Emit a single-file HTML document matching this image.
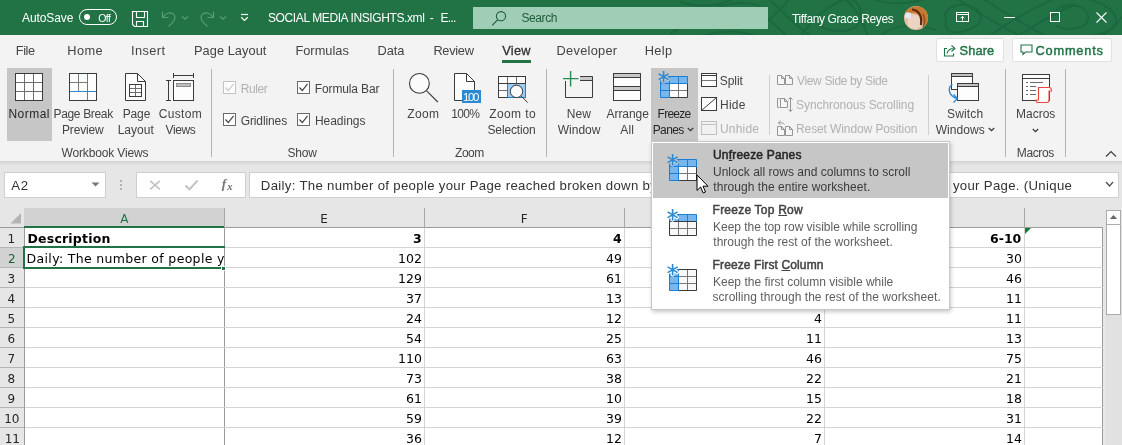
<!DOCTYPE html>
<html lang="en"><head><meta charset="utf-8"><title>SOCIAL MEDIA INSIGHTS.xml - Excel</title>
<style>
html,body{margin:0;padding:0;background:#fff;}
body{width:1122px;height:445px;overflow:hidden;font-family:"Liberation Sans",sans-serif;}
#app{will-change:transform;position:relative;width:1122px;height:445px;overflow:hidden;background:#fff;}
#app div,#app svg,#app span{position:absolute;box-sizing:border-box;}
.t{white-space:pre;}
.t u{text-decoration:underline;text-underline-offset:1px;}
.sep{width:1px;background:#b4b4b4;}
.cb{width:13px;height:13px;border:1px solid #6a6a6a;background:#fdfdfd;}
.cb.dis{border-color:#c4c4c4;}
.cb svg{left:0;top:0;}
.hl{background:#e6e6e6;}
.gv{width:1px;background:#d4d4d4;top:228px;height:217px;}
.gh{height:1px;background:#d4d4d4;left:25px;width:1078px;}
.hv{width:1px;background:#a6a6a6;top:208px;height:20px;}
.rh{height:1px;background:#b4b4b4;left:0;width:24px;}

</style></head>
<body>
<div id="app">
<!-- ===== title bar ===== -->
<div id="titlebar" style="left:0;top:0;width:1122px;height:35px;background:#217346;"></div>
<svg id="tpattern" style="left:670px;top:0" width="452" height="35" viewBox="-90 0 452 35" fill="none" stroke="#1a643b" stroke-width="2" opacity=".7">
  <path d="M-90 34 C -70 20, -50 4, -20 3 S 10 20, 0 27"/>
  <path d="M-60 37 C -40 30, -20 30, 0 37"/>
  <path d="M-80 2 C -60 8, -40 6, -25 -2"/>
  <path d="M0 27 C 12 18, 22 8, 30 -2"/>
  <path d="M8 -2 C 20 10, 34 24, 52 37"/>
  <path d="M-4 8 C 10 20, 20 30, 28 37"/>
  <path d="M40 37 C 50 22, 62 10, 78 2 S 104 6, 100 20 S 70 34, 58 24"/>
  <path d="M84 -2 C 96 8, 104 22, 108 37"/>
  <path d="M112 -2 C 126 6, 150 4, 170 -2"/>
  <path d="M120 37 C 130 26, 150 22, 176 30"/>
  <path d="M186 20 C 182 8, 196 2, 210 6 S 226 24, 208 30 S 184 30, 186 20"/>
  <path d="M196 -2 C 214 10, 236 24, 262 37"/>
  <path d="M222 -2 C 240 10, 262 24, 288 37"/>
  <path d="M228 37 C 246 24, 268 10, 296 -2"/>
  <path d="M256 37 C 274 26, 292 14, 316 4"/>
  <path d="M296 10 C 306 2, 326 4, 328 16 S 310 32, 296 26"/>
  <path d="M324 -2 C 340 2, 358 10, 356 22 S 336 34, 322 37"/>
  <path d="M340 37 C 350 30, 358 24, 364 14"/>
</svg>
<div id="search" style="left:473px;top:7px;width:295px;height:22px;background:#a0cdb5;"></div>
<svg style="left:491px;top:10px" width="17" height="17" viewBox="0 0 17 17" fill="none" stroke="#1e5c3a" stroke-width="1.1"><circle cx="10" cy="6.2" r="4.6"/><path d="M6.8 9.6 L1.2 15.4"/></svg>
<!-- autosave toggle -->
<div style="left:79px;top:9px;width:38px;height:16px;border:1px solid #fff;border-radius:8px;"></div>
<div style="left:84px;top:14px;width:6px;height:6px;border-radius:3px;background:#fff;"></div>
<!-- save -->
<svg style="left:131px;top:10px" width="19" height="18" viewBox="0 0 19 18" fill="none" stroke="#fff" stroke-width="1.1"><path d="M1.5 1.5 H16.5 V16.5 H3.5 L1.5 14.5 Z"/><path d="M5.5 1.5 V7.5 H13.5 V1.5"/><path d="M5.5 16.5 V11.5 H12.5 V16.5"/></svg>
<!-- undo / redo -->
<svg style="left:160px;top:9px" width="70" height="20" viewBox="0 0 70 20" fill="none" stroke="#5c9c7a" stroke-width="1.1"><path d="M2.5 2.5 V8.5 H8.5"/><path d="M2.8 8.3 C6 3.5 11.5 2.5 14.3 6 C16.5 9 14.5 12.5 8.5 17.5"/><path d="M22 7.5 L25 10.2 L28 7.5"/><path d="M53.5 2.5 V8.5 H47.5"/><path d="M53.2 8.3 C50 3.5 44.5 2.5 41.7 6 C39.5 9 41.5 12.5 47.5 17.5"/><path d="M60 7.5 L63 10.2 L66 7.5"/></svg>
<!-- customize qat -->
<svg style="left:240px;top:13px" width="10" height="9" viewBox="0 0 10 9" fill="none" stroke="#fff" stroke-width="1.2"><path d="M1 1.500 H8"/><path d="M1.200 4.300 L4.500 7.500 L7.800 4.300"/></svg>
<!-- avatar -->
<svg id="avatar" style="left:904px;top:6px" width="24" height="24" viewBox="0 0 24 24"><clipPath id="avc"><circle cx="12" cy="12" r="12"/></clipPath><g clip-path="url(#avc)"><rect width="24" height="24" fill="#e2bea6"/><ellipse cx="10.500" cy="16" rx="7" ry="7" fill="#edd3c1"/><path d="M-1 9 C 3 -1, 19 -3, 25 6 V 22 C 21 23, 19 16, 17 11 C 13 6, 6 6, -1 9 Z" fill="#c8792f"/><path d="M8 3.500 C 15 4, 18 10, 17 19" fill="none" stroke="#5a2715" stroke-width="2.200"/><path d="M19 8 C 21 12, 21 17, 19 21" fill="none" stroke="#9a4f1e" stroke-width="1.500"/><circle cx="4" cy="9.500" r="3.200" fill="#e4e9f3"/></g></svg>
<!-- window buttons -->
<svg style="left:956px;top:12px" width="14" height="11" viewBox="0 0 14 11" fill="none" stroke="#fff" stroke-width="1"><rect x=".5" y=".5" width="12" height="9"/><path d="M.5 2.500 H12.500"/><path d="M6.500 8.500 V4.500 M4.500 6.300 L6.500 4.300 L8.500 6.300"/></svg>
<div style="left:1004px;top:17px;width:11px;height:1px;background:#fff;"></div>
<div style="left:1050px;top:12px;width:10px;height:10px;border:1px solid #fff;"></div>
<svg style="left:1095.500px;top:12px" width="11" height="11" viewBox="0 0 11 11" fill="none" stroke="#fff" stroke-width="1.1"><path d="M.5 .5 L10.5 10.5 M10.5 .5 L.5 10.5"/></svg>

<!-- ===== ribbon ===== -->
<div id="ribbon" style="left:0;top:35px;width:1122px;height:126px;background:#f3f3f3;"></div>
<div id="below" style="left:0;top:161px;width:1122px;height:47px;background:linear-gradient(#d2d2d2 0,#dcdcdc 2px,#e6e6e6 5px,#e6e6e6 100%);"></div>
<div style="left:502px;top:60px;width:29px;height:3px;background:#217346;"></div>
<!-- share / comments -->
<div style="left:936px;top:38px;width:68px;height:24px;background:#fff;border:1px solid #e0e0e0;border-radius:2px;"></div>
<div style="left:1012px;top:38px;width:100px;height:24px;background:#fff;border:1px solid #e0e0e0;border-radius:2px;"></div>
<svg style="left:943px;top:44px" width="15" height="13" viewBox="0 0 15 13" fill="none" stroke="#217346" stroke-width="1.1"><path d="M4 4.5 H1.5 V12 H10.5 V9.5"/><path d="M4 9.5 C5 6 7.5 4.5 10.5 4.5 M8.5 1.5 L12 4.5 L8.5 7.5"/></svg>
<svg style="left:1020px;top:44px" width="13" height="12" viewBox="0 0 13 12" fill="none" stroke="#217346" stroke-width="1.1"><path d="M1 1 H12 V8 H5.5 L3 10.5 V8 H1 Z"/></svg>

<!-- selected buttons -->
<div style="left:7px;top:68px;width:45px;height:73px;background:#c6c6c6;"></div>
<div style="left:651px;top:68px;width:47px;height:74px;background:#c6c6c6;"></div>

<!-- Normal -->
<svg style="left:14px;top:72px" width="30" height="30" viewBox="0 0 30 30" fill="#fdfdfd" stroke="#3b3b3b" stroke-width="1"><rect x="1.5" y="1.5" width="27" height="27"/><path d="M10.5 2 V28 M19.5 2 V28 M2 10.5 H28 M2 19.5 H28" stroke="#6e6e6e"/><rect x="1.5" y="1.5" width="27" height="27" fill="none"/></svg>
<!-- Page break preview -->
<svg style="left:68px;top:72px" width="30" height="30" viewBox="0 0 30 30" fill="#fdfdfd" stroke="#3b3b3b" stroke-width="1"><rect x="1.5" y="1.5" width="27" height="27"/><path d="M10.5 2 V19 M2 10.5 H19" stroke="#7a7a7a"/><path d="M19.5 2 V28 M2 19.5 H28" stroke="#2b8ad2"/><rect x="1.5" y="1.5" width="27" height="27" fill="none"/></svg>
<!-- Page layout -->
<svg style="left:124px;top:72px" width="24" height="30" viewBox="0 0 24 30" fill="#fdfdfd" stroke="#3b3b3b" stroke-width="1"><path d="M1.5 1.5 H13.5 L21.5 9.5 V28.5 H1.5 Z"/><path d="M13.5 1.5 V9.5 H21.5" fill="none"/><rect x="5.5" y="12.5" width="12" height="12"/><path d="M6 16.5 H17 M6 20.5 H17 M11.5 13 V24" stroke="#6e6e6e"/></svg>
<!-- Custom views -->
<svg style="left:166px;top:72px" width="30" height="30" viewBox="0 0 30 30" fill="none" stroke="#3b3b3b" stroke-width="1"><rect x="7.5" y="8.5" width="20" height="20" fill="#fdfdfd"/><path d="M7.5 1 V6 M27.5 1 V6 M7.5 3.5 H27.5"/><path d="M0 8.5 H5 M0 28.5 H5 M2.5 8.5 V28.5"/><rect x="10.500" y="11.5" width="14" height="3" fill="#bdbdbd" stroke="#8f8f8f"/></svg>

<div class="sep" style="left:211px;top:69px;height:88px;"></div>
<!-- checkboxes -->
<div class="cb dis" style="left:223px;top:81px;"><svg width="11" height="11" viewBox="0 0 11 11" fill="none" stroke="#c8c8c8" stroke-width="1.2"><path d="M1.5 5.5 L4.3 8.5 L9.5 1.8"/></svg></div>
<div class="cb" style="left:223px;top:113px;"><svg width="11" height="11" viewBox="0 0 11 11" fill="none" stroke="#444" stroke-width="1.2"><path d="M1.5 5.5 L4.3 8.5 L9.5 1.8"/></svg></div>
<div class="cb" style="left:297px;top:81px;"><svg width="11" height="11" viewBox="0 0 11 11" fill="none" stroke="#444" stroke-width="1.2"><path d="M1.5 5.5 L4.3 8.5 L9.5 1.8"/></svg></div>
<div class="cb" style="left:297px;top:113px;"><svg width="11" height="11" viewBox="0 0 11 11" fill="none" stroke="#444" stroke-width="1.2"><path d="M1.5 5.5 L4.3 8.5 L9.5 1.8"/></svg></div>
<div class="sep" style="left:393px;top:69px;height:88px;"></div>

<!-- Zoom -->
<svg style="left:407px;top:72px" width="32" height="32" viewBox="0 0 32 32" fill="none" stroke="#3b3b3b" stroke-width="1.1"><circle cx="12.4" cy="11.4" r="9.9" fill="#fbfbfb"/><path d="M19.6 18.8 L30.8 30"/></svg>
<!-- 100% -->
<svg style="left:453px;top:72px" width="30" height="32" viewBox="0 0 30 32" fill="none" stroke="#3b3b3b" stroke-width="1"><path d="M1.5 1.5 H13.5 L21.5 9.5 V28.5 H1.5 Z" fill="#fdfdfd"/><path d="M13.5 1.5 V9.5 H21.5"/><rect x="9" y="18" width="19" height="13" fill="#2b8ad2" stroke="none"/></svg>
<!-- zoom to selection -->
<svg style="left:497px;top:75px" width="32" height="30" viewBox="0 0 32 30" fill="none" stroke="#3b3b3b" stroke-width="1"><rect x="1.5" y="1.5" width="27" height="21" fill="#fdfdfd"/><path d="M2 8.5 H28 M2 15.5 H10 M10.5 2 V22 M19.5 2 V8" stroke="#6e6e6e"/><rect x="10.5" y="8.5" width="18" height="14" fill="#9ccbf3" stroke="#1f7fd0"/><rect x="1.5" y="1.5" width="27" height="7" /><path d="M1.5 8.5 V22.5 H10.5"/><circle cx="19.5" cy="16.4" r="6.2" fill="#fbfbfb"/><path d="M24 20.9 L30.8 27.7"/></svg>
<div class="sep" style="left:546px;top:69px;height:88px;"></div>
<!-- new window -->
<svg style="left:562px;top:70px" width="32" height="30" viewBox="0 0 32 30" fill="none" stroke="#3b3b3b" stroke-width="1"><rect x="18" y="6.5" width="12.5" height="4" fill="#c8c8c8" stroke="none"/><path d="M3.5 11 V27.5 H30.5 V6.5 H18 M18 10.5 H30.5"/><path d="M8.6 1 V16.5 M1 8.6 H16.5" stroke="#2b8c52" stroke-width="1.4"/></svg>
<!-- arrange all -->
<svg style="left:612px;top:72px" width="30" height="30" viewBox="0 0 30 30" fill="none" stroke="#3b3b3b" stroke-width="1"><rect x="1.5" y="1.5" width="27" height="27" fill="#fdfdfd"/><rect x="1.5" y="1.5" width="27" height="4" fill="#c8c8c8"/><rect x="1.5" y="14.5" width="27" height="4" fill="#c8c8c8"/></svg>
<!-- freeze panes icon -->
<svg style="left:657px;top:70px" width="32" height="30" viewBox="0 0 32 30" fill="none" stroke="#3b3b3b" stroke-width="1"><rect x="3.500" y="6.500" width="27" height="21" fill="#fdfdfd" stroke="none"/><rect x="3.500" y="6.500" width="27" height="7" fill="#78b6ee" stroke="none"/><rect x="3.500" y="6.500" width="9" height="21" fill="#78b6ee" stroke="none"/><path d="M13 20.500 H30 M21.500 14 V27" stroke="#777"/><path d="M30.500 13.500 V27.500 H12.500" stroke="#3b3b3b"/><path d="M3.500 6.500 H30.500 V13.500 H12.500 V27.500 H3.500 Z M21.500 6.500 V13.500 M12.500 6.500 V13.500 H3.500 M3.500 20.500 H12.500" stroke="#1b7fd4"/><path d="M6.600 1.500 V12 M2 4.100 L11.200 9.400 M11.200 4.100 L2 9.400" stroke="#c6c6c6" stroke-width="3.600" stroke-linecap="round" fill="none"/><path d="M6.600 1 V12.500 M1.600 3.850 L11.600 9.650 M11.600 3.850 L1.600 9.650" stroke="#2b8ad2" stroke-width="1.600" fill="none"/></svg>

<!-- split / hide / unhide -->
<svg style="left:701px;top:73px" width="17" height="15" viewBox="0 0 17 15" fill="#fdfdfd" stroke="#3b3b3b" stroke-width="1"><rect x=".5" y=".5" width="15" height="13"/><path d="M.5 2.500 H15.500"/><path d="M1 7.500 H15" stroke="#777"/></svg>
<svg style="left:701px;top:97px" width="17" height="15" viewBox="0 0 17 15" fill="#fff" stroke="#3b3b3b" stroke-width="1"><rect x=".5" y=".5" width="15" height="13"/><path d="M.5 13.500 L15.500 .5"/></svg>
<svg style="left:701px;top:121px" width="17" height="15" viewBox="0 0 17 15" fill="#f1f1f1" stroke="#c0c0c0" stroke-width="1"><rect x=".5" y=".5" width="15" height="13"/><path d="M.5 3.500 H15.500"/></svg>
<div class="sep" style="left:769px;top:75px;height:60px;background:#cfcfcf"></div>
<!-- view side by side etc (disabled) -->
<svg style="left:777px;top:75px" width="17" height="11" viewBox="0 0 17 11" fill="#f6f6f6" stroke="#959595" stroke-width="1"><path d="M.5 .5 H4.500 L7.500 3.500 V9.500 H.5 Z M4.500 .5 V3.500 H7.500 M8.500 .5 H12.500 L15.500 3.500 V9.500 H8.500 Z M12.500 .5 V3.500 H15.500"/></svg>
<svg style="left:777px;top:96px" width="17" height="17" viewBox="0 0 17 17" fill="none" stroke="#959595" stroke-width="1"><path d="M2.500 2.500 H.5 V11.500 H2.500"/><path d="M3.500 2.500 H7.500 L10.500 5.500 V11.500 H3.500 Z M7.500 2.500 V5.500 H10.500" fill="#f6f6f6"/><path d="M13.500 1.500 V15.500 M11.500 3.500 L13.500 1.500 L15.500 3.500 M11.500 13.500 L13.500 15.500 L15.500 13.500"/></svg>
<svg style="left:777px;top:120px" width="17" height="17" viewBox="0 0 17 17" fill="none" stroke="#959595" stroke-width="1"><path d="M.5 6.500 H4.500 L7.500 9.500 V15.500 H.5 Z M4.500 6.500 V9.500 H7.500 M8.500 6.500 H12.500 L15.500 9.500 V15.500 H8.500 Z M12.500 6.500 V9.500 H15.500" fill="#f6f6f6"/><path d="M7.500 4.500 C6.500 2.800 4 2.500 1.500 2.800 M3.500 .8 L1.300 2.800 L3.500 4.800"/></svg>
<div class="sep" style="left:928px;top:75px;height:60px;background:#cfcfcf"></div>
<!-- switch windows -->
<svg style="left:948px;top:72px" width="34" height="32" viewBox="0 0 34 32" fill="none" stroke="#3b3b3b" stroke-width="1"><rect x="3.500" y="1.500" width="21" height="16" fill="#fdfdfd"/><rect x="3.500" y="1.500" width="21" height="3" fill="#c0c0c0"/><rect x="9.500" y="11.500" width="21" height="17" fill="#fdfdfd"/><rect x="9.500" y="11.500" width="21" height="3" fill="#c0c0c0"/><path d="M4.500 12.500 C -0.500 15, 0 24, 9 26.500 M5.500 22.500 L9.500 26.500 L5.500 30.500" stroke="#2b8ad2" stroke-width="1.300"/></svg>
<div class="sep" style="left:1005px;top:69px;height:88px;"></div>
<!-- macros -->
<svg style="left:1021px;top:73px" width="32" height="31" viewBox="0 0 32 31" fill="none" stroke="#3b3b3b" stroke-width="1"><rect x="1.500" y="1.500" width="27" height="26" fill="#fdfdfd"/><path d="M1.500 5.500 H28.500"/><path d="M5 9.500 H7 M9 9.500 H22 M5 13.500 H7 M9 13.500 H15 M5 17.500 H7 M9 17.500 H15 M5 21.500 H7 M9 21.500 H15" stroke="#6a6a6a"/><path d="M17.500 14.500 H28 C30 14.500 30.500 16 30.500 18 H28 V27 C28 29 27 29.500 25.500 29.500 H17 C15.500 29.500 15 28.500 15 27 H17.500 Z" fill="#fdfdfd" stroke="#e8473f" stroke-width="1.100"/></svg>
<div class="sep" style="left:1065px;top:69px;height:88px;"></div>
<svg style="left:1105px;top:150px" width="12" height="8" viewBox="0 0 12 8" fill="none" stroke="#3b3b3b" stroke-width="1.1"><path d="M1 6.500 L6 1.500 L11 6.500"/></svg>
<!-- dropdown chevrons -->
<svg style="left:687px;top:127px" width="7" height="5" viewBox="0 0 7 5" fill="none" stroke="#3b3b3b" stroke-width="1.300"><path d="M.8 1 L3.500 3.700 L6.200 1"/></svg>
<svg style="left:987.500px;top:127px" width="7" height="5" viewBox="0 0 7 5" fill="none" stroke="#3b3b3b" stroke-width="1.300"><path d="M.8 1 L3.500 3.700 L6.200 1"/></svg>
<svg style="left:1032px;top:127.500px" width="7" height="5" viewBox="0 0 7 5" fill="none" stroke="#3b3b3b" stroke-width="1.300"><path d="M.8 1 L3.500 3.700 L6.200 1"/></svg>

<!-- ===== formula bar ===== -->
<div style="left:4px;top:172px;width:102px;height:26px;background:#fff;border:1px solid #d0d0d0;"></div>
<svg style="left:91px;top:182px" width="9" height="5" viewBox="0 0 9 5"><path d="M.5 .5 H8.500 L4.500 4.500 Z" fill="#777"/></svg>
<div style="left:120px;top:180px;width:2px;height:2px;background:#b0b0b0;"></div>
<div style="left:120px;top:184px;width:2px;height:2px;background:#b0b0b0;"></div>
<div style="left:120px;top:188px;width:2px;height:2px;background:#b0b0b0;"></div>
<div style="left:136px;top:172px;width:110px;height:26px;background:#fff;border:1px solid #d0d0d0;"></div>
<svg style="left:149px;top:179px" width="12" height="12" viewBox="0 0 12 12" fill="none" stroke="#c2c2c2" stroke-width="1.600"><path d="M1.200 1.800 L10.800 10.400 M10.800 1.800 L1.200 10.400"/></svg>
<svg style="left:184px;top:179px" width="15" height="12" viewBox="0 0 15 12" fill="none" stroke="#c2c2c2" stroke-width="2"><path d="M1.500 6.500 L5.500 10.300 L13.500 1.500"/></svg>
<div style="left:249px;top:172px;width:870px;height:26px;background:#fff;border:1px solid #d0d0d0;"></div>
<svg style="left:1105px;top:181px" width="9" height="7" viewBox="0 0 9 7" fill="none" stroke="#555" stroke-width="1.4"><path d="M1 1 L4.500 5 L8 1"/></svg>

<!-- ===== grid ===== -->
<div id="sheet" style="left:0;top:228px;width:1103px;height:217px;background:#fff;"></div>
<div id="colhdr" style="left:0;top:208px;width:1122px;height:20px;background:#e6e6e6;"></div>
<div id="rowhdr" style="left:0;top:228px;width:25px;height:217px;background:#e6e6e6;"></div>
<div style="left:0;top:248px;width:24px;height:20px;background:#d2d2d2;"></div>
<div style="left:24px;top:208px;width:201px;height:20px;background:#d2d2d2;"></div>
<div style="left:0;top:227px;width:1103px;height:1px;background:#9b9b9b;"></div>
<div style="left:24px;top:226px;width:201px;height:2px;background:#217346;"></div>
<svg style="left:8px;top:212px" width="14" height="13" viewBox="0 0 14 13"><path d="M13 1 V11.5 H2.500 Z" fill="#b4b4b4"/></svg>
<div class="hv" style="left:224px;"></div><div class="hv" style="left:424px;"></div><div class="hv" style="left:624px;"></div><div class="hv" style="left:824px;"></div><div class="hv" style="left:1024px;"></div>
<div class="gv" style="left:424px;"></div><div class="gv" style="left:624px;"></div><div class="gv" style="left:824px;"></div><div class="gv" style="left:1024px;"></div>
<div class="gv" style="left:224px;background:#9b9b9b;"></div>
<div class="gv" style="left:24px;background:#9b9b9b;"></div>
<div class="gv" style="left:1102px;background:#9b9b9b;"></div>
<div class="gh" style="top:247px"></div><div class="gh" style="top:267px"></div><div class="gh" style="top:287px"></div><div class="gh" style="top:307px"></div><div class="gh" style="top:327px"></div><div class="gh" style="top:347px"></div><div class="gh" style="top:367px"></div><div class="gh" style="top:387px"></div><div class="gh" style="top:407px"></div><div class="gh" style="top:427px"></div>
<div class="rh" style="top:247px"></div><div class="rh" style="top:267px"></div><div class="rh" style="top:287px"></div><div class="rh" style="top:307px"></div><div class="rh" style="top:327px"></div><div class="rh" style="top:347px"></div><div class="rh" style="top:367px"></div><div class="rh" style="top:387px"></div><div class="rh" style="top:407px"></div><div class="rh" style="top:427px"></div>
<!-- selection -->
<div style="left:23px;top:246px;width:202px;height:23px;border:2px solid #217346;border-right:none;"></div>
<div style="left:221px;top:266px;width:5px;height:5px;background:#217346;border:1px solid #fff;"></div>
<svg style="left:1025px;top:228px" width="6" height="6" viewBox="0 0 6 6"><path d="M0 0 H6 L0 6 Z" fill="#1a7a36"/></svg>
<!-- scrollbar -->
<div style="left:1103px;top:208px;width:19px;height:237px;background:#e6e6e6;"></div>
<div style="left:1106px;top:225px;width:16px;height:220px;background:#e1e1e1;"></div>
<div style="left:1106px;top:210px;width:15px;height:15px;background:#fff;border:1px solid #ababab;"></div>
<svg style="left:1109px;top:214px" width="9" height="6" viewBox="0 0 9 6"><path d="M.8 5 H8.200 L4.500 1 Z" fill="#686868"/></svg>
<div style="left:1106px;top:224px;width:15px;height:91px;background:#fff;border:1px solid #ababab;"></div>

<!-- text labels -->
<span class="t" style="left:22.00px;top:10.00px;font-size:12px;line-height:16px;color:#fff;letter-spacing:-0.100px;">AutoSave</span>
<span class="t" style="left:98.30px;top:11.00px;font-size:10.5px;line-height:14px;color:#fff;letter-spacing:-0.650px;">Off</span>
<span class="t" style="left:268.00px;top:10.30px;font-size:12px;line-height:16px;color:#fff;letter-spacing:-0.392px;">SOCIAL MEDIA INSIGHTS.xml</span>
<span class="t" style="left:429.80px;top:10.30px;font-size:12px;line-height:16px;color:#fff;">-</span>
<span class="t" style="left:440.60px;top:10.30px;font-size:12px;line-height:16px;color:#fff;letter-spacing:-0.733px;">E...</span>
<span class="t" style="left:521.40px;top:10.00px;font-size:12px;line-height:16px;color:#1e5c3a;letter-spacing:-0.400px;">Search</span>
<span class="t" style="left:792.00px;top:10.60px;font-size:12px;line-height:16px;color:#fff;letter-spacing:-0.389px;">Tiffany Grace Reyes</span>
<span class="t" style="left:15.80px;top:42.00px;font-size:12.8px;line-height:17px;color:#444;letter-spacing:-0.433px;">File</span>
<span class="t" style="left:67.30px;top:42.00px;font-size:12.8px;line-height:17px;color:#444;letter-spacing:0.367px;">Home</span>
<span class="t" style="left:131.00px;top:42.00px;font-size:12.8px;line-height:17px;color:#444;letter-spacing:0.400px;">Insert</span>
<span class="t" style="left:194.00px;top:42.00px;font-size:12.8px;line-height:17px;color:#444;letter-spacing:0.050px;">Page Layout</span>
<span class="t" style="left:295.40px;top:42.00px;font-size:12.8px;line-height:17px;color:#444;letter-spacing:0.014px;">Formulas</span>
<span class="t" style="left:377.40px;top:42.00px;font-size:12.8px;line-height:17px;color:#444;">Data</span>
<span class="t" style="left:433.40px;top:42.00px;font-size:12.8px;line-height:17px;color:#444;letter-spacing:-0.280px;">Review</span>
<span class="t" style="left:556.60px;top:42.00px;font-size:12.8px;line-height:17px;color:#444;letter-spacing:0.263px;">Developer</span>
<span class="t" style="left:644.80px;top:42.00px;font-size:12.8px;line-height:17px;color:#444;letter-spacing:0.300px;">Help</span>
<span class="t" style="left:502.30px;top:42.00px;font-size:12.8px;line-height:17px;color:#333;letter-spacing:0.233px;-webkit-text-stroke:.3px #333;">View</span>
<span class="t" style="left:959.50px;top:42.00px;font-size:12.8px;line-height:17px;color:#217346;letter-spacing:0.125px;-webkit-text-stroke:.45px #217346;">Share</span>
<span class="t" style="left:1035.50px;top:42.00px;font-size:12.8px;line-height:17px;color:#217346;letter-spacing:0.786px;-webkit-text-stroke:.45px #217346;">Comments</span>
<span class="t" style="left:8.50px;top:106.00px;font-size:12px;line-height:16px;color:#262626;letter-spacing:0.450px;">Normal</span>
<span class="t" style="left:53.50px;top:106.00px;font-size:12px;line-height:16px;color:#444;letter-spacing:-0.333px;">Page Break</span>
<span class="t" style="left:62.00px;top:122.00px;font-size:12px;line-height:16px;color:#444;letter-spacing:-0.167px;">Preview</span>
<span class="t" style="left:122.70px;top:106.00px;font-size:12px;line-height:16px;color:#444;letter-spacing:-0.133px;">Page</span>
<span class="t" style="left:117.70px;top:122.00px;font-size:12px;line-height:16px;color:#444;">Layout</span>
<span class="t" style="left:158.70px;top:106.00px;font-size:12px;line-height:16px;color:#444;letter-spacing:0.360px;">Custom</span>
<span class="t" style="left:165.50px;top:122.00px;font-size:12px;line-height:16px;color:#444;letter-spacing:-0.375px;">Views</span>
<span class="t" style="left:61.50px;top:145.00px;font-size:12px;line-height:16px;color:#444;letter-spacing:-0.146px;">Workbook Views</span>
<span class="t" style="left:240.80px;top:81.00px;font-size:12px;line-height:16px;color:#b1b1b1;letter-spacing:-0.450px;">Ruler</span>
<span class="t" style="left:240.70px;top:113.00px;font-size:12px;line-height:16px;color:#444;letter-spacing:-0.112px;">Gridlines</span>
<span class="t" style="left:314.80px;top:81.00px;font-size:12px;line-height:16px;color:#444;letter-spacing:-0.130px;">Formula Bar</span>
<span class="t" style="left:314.90px;top:113.00px;font-size:12px;line-height:16px;color:#444;letter-spacing:-0.014px;">Headings</span>
<span class="t" style="left:287.60px;top:145.00px;font-size:12px;line-height:16px;color:#444;letter-spacing:-0.233px;">Show</span>
<span class="t" style="left:407.30px;top:106.00px;font-size:12px;line-height:16px;color:#444;letter-spacing:0.333px;">Zoom</span>
<span class="t" style="left:451.20px;top:106.00px;font-size:12px;line-height:16px;color:#444;letter-spacing:-0.667px;">100%</span>
<span class="t" style="left:463.00px;top:89.90px;font-size:11.5px;line-height:15px;color:#fff;letter-spacing:-1.400px;">100</span>
<span class="t" style="left:489.20px;top:106.00px;font-size:12px;line-height:16px;color:#444;letter-spacing:0.417px;">Zoom to</span>
<span class="t" style="left:487.50px;top:122.00px;font-size:12px;line-height:16px;color:#444;letter-spacing:-0.138px;">Selection</span>
<span class="t" style="left:455.10px;top:145.00px;font-size:12px;line-height:16px;color:#444;letter-spacing:-0.533px;">Zoom</span>
<span class="t" style="left:566.80px;top:106.00px;font-size:12px;line-height:16px;color:#444;">New</span>
<span class="t" style="left:557.70px;top:122.00px;font-size:12px;line-height:16px;color:#444;letter-spacing:0.020px;">Window</span>
<span class="t" style="left:606.50px;top:106.00px;font-size:12px;line-height:16px;color:#444;letter-spacing:-0.050px;">Arrange</span>
<span class="t" style="left:620.20px;top:122.00px;font-size:12px;line-height:16px;color:#444;letter-spacing:0.200px;">All</span>
<span class="t" style="left:657.60px;top:106.00px;font-size:12px;line-height:16px;color:#262626;letter-spacing:-0.760px;">Freeze</span>
<span class="t" style="left:652.70px;top:122.00px;font-size:12px;line-height:16px;color:#262626;letter-spacing:-0.600px;">Panes</span>
<span class="t" style="left:719.80px;top:73.00px;font-size:12px;line-height:16px;color:#444;letter-spacing:-0.075px;">Split</span>
<span class="t" style="left:720.00px;top:97.00px;font-size:12px;line-height:16px;color:#444;letter-spacing:0.233px;">Hide</span>
<span class="t" style="left:720.00px;top:121.00px;font-size:12px;line-height:16px;color:#b1b1b1;letter-spacing:0.200px;">Unhide</span>
<span class="t" style="left:797.00px;top:73.00px;font-size:12px;line-height:16px;color:#b1b1b1;letter-spacing:-0.344px;">View Side by Side</span>
<span class="t" style="left:796.00px;top:97.00px;font-size:12px;line-height:16px;color:#b1b1b1;letter-spacing:-0.062px;">Synchronous Scrolling</span>
<span class="t" style="left:796.00px;top:121.00px;font-size:12px;line-height:16px;color:#b1b1b1;letter-spacing:-0.100px;">Reset Window Position</span>
<span class="t" style="left:947.00px;top:106.00px;font-size:12px;line-height:16px;color:#444;letter-spacing:0.150px;">Switch</span>
<span class="t" style="left:935.75px;top:122.00px;font-size:12px;line-height:16px;color:#444;letter-spacing:0.042px;">Windows</span>
<span class="t" style="left:1016.00px;top:106.00px;font-size:12px;line-height:16px;color:#444;">Macros</span>
<span class="t" style="left:1016.75px;top:145.00px;font-size:12px;line-height:16px;color:#444;letter-spacing:-0.350px;">Macros</span>
<span class="t" style="left:11.20px;top:177.00px;font-size:13.2px;line-height:17px;color:#333;letter-spacing:0.800px;">A2</span>
<span class="t" style="left:221.80px;top:175.00px;font-size:13.5px;line-height:18px;color:#777;font-weight:700;font-style:italic;font-family:'Liberation Serif', serif;">f</span>
<span class="t" style="left:227.20px;top:179.60px;font-size:10.5px;line-height:14px;color:#6a6a6a;font-weight:700;font-style:italic;font-family:'Liberation Serif', serif;">x</span>
<span class="t" style="left:260.80px;top:177.00px;font-size:13.2px;line-height:17px;color:#333;letter-spacing:0.317px;">Daily: The number of people your Page reached broken down by how many times people saw any content about your Page. (Unique</span>
<span class="t" style="left:120.30px;top:211.00px;font-size:12px;line-height:16px;color:#217346;font-family:'DejaVu Sans', 'Liberation Sans', sans-serif;">A</span>
<span class="t" style="left:320.30px;top:211.00px;font-size:12px;line-height:16px;color:#262626;font-family:'DejaVu Sans', 'Liberation Sans', sans-serif;">E</span>
<span class="t" style="left:520.80px;top:211.00px;font-size:12px;line-height:16px;color:#262626;font-family:'DejaVu Sans', 'Liberation Sans', sans-serif;">F</span>
<span class="t" style="left:719.80px;top:211.00px;font-size:12px;line-height:16px;color:#262626;font-family:'DejaVu Sans', 'Liberation Sans', sans-serif;">G</span>
<span class="t" style="left:919.80px;top:211.00px;font-size:12px;line-height:16px;color:#262626;font-family:'DejaVu Sans', 'Liberation Sans', sans-serif;">H</span>
<span class="t" style="left:7.60px;top:230.80px;font-size:12px;line-height:16px;color:#262626;font-family:'DejaVu Sans', 'Liberation Sans', sans-serif;">1</span>
<span class="t" style="left:413.00px;top:231.00px;font-size:12.5px;line-height:16px;color:#000;font-weight:700;font-family:'DejaVu Sans', 'Liberation Sans', sans-serif;">3</span>
<span class="t" style="left:613.00px;top:231.00px;font-size:12.5px;line-height:16px;color:#000;font-weight:700;font-family:'DejaVu Sans', 'Liberation Sans', sans-serif;">4</span>
<span class="t" style="left:990.00px;top:231.00px;font-size:12.5px;line-height:16px;color:#000;font-weight:700;font-family:'DejaVu Sans', 'Liberation Sans', sans-serif;">6-10</span>
<span class="t" style="left:8.10px;top:250.80px;font-size:12px;line-height:16px;color:#1f5f3a;font-family:'DejaVu Sans', 'Liberation Sans', sans-serif;">2</span>
<span class="t" style="left:398.00px;top:251.00px;font-size:12.5px;line-height:16px;color:#000;font-family:'DejaVu Sans', 'Liberation Sans', sans-serif;">102</span>
<span class="t" style="left:606.00px;top:251.00px;font-size:12.5px;line-height:16px;color:#000;font-family:'DejaVu Sans', 'Liberation Sans', sans-serif;">49</span>
<span class="t" style="left:1006.00px;top:251.00px;font-size:12.5px;line-height:16px;color:#000;font-family:'DejaVu Sans', 'Liberation Sans', sans-serif;">30</span>
<span class="t" style="left:7.60px;top:270.80px;font-size:12px;line-height:16px;color:#262626;font-family:'DejaVu Sans', 'Liberation Sans', sans-serif;">3</span>
<span class="t" style="left:398.00px;top:271.00px;font-size:12.5px;line-height:16px;color:#000;font-family:'DejaVu Sans', 'Liberation Sans', sans-serif;">129</span>
<span class="t" style="left:606.00px;top:271.00px;font-size:12.5px;line-height:16px;color:#000;font-family:'DejaVu Sans', 'Liberation Sans', sans-serif;">61</span>
<span class="t" style="left:1006.00px;top:271.00px;font-size:12.5px;line-height:16px;color:#000;font-family:'DejaVu Sans', 'Liberation Sans', sans-serif;">46</span>
<span class="t" style="left:7.60px;top:290.80px;font-size:12px;line-height:16px;color:#262626;font-family:'DejaVu Sans', 'Liberation Sans', sans-serif;">4</span>
<span class="t" style="left:406.00px;top:291.00px;font-size:12.5px;line-height:16px;color:#000;font-family:'DejaVu Sans', 'Liberation Sans', sans-serif;">37</span>
<span class="t" style="left:606.00px;top:291.00px;font-size:12.5px;line-height:16px;color:#000;font-family:'DejaVu Sans', 'Liberation Sans', sans-serif;">13</span>
<span class="t" style="left:1006.00px;top:291.00px;font-size:12.5px;line-height:16px;color:#000;font-family:'DejaVu Sans', 'Liberation Sans', sans-serif;">11</span>
<span class="t" style="left:7.60px;top:310.80px;font-size:12px;line-height:16px;color:#262626;font-family:'DejaVu Sans', 'Liberation Sans', sans-serif;">5</span>
<span class="t" style="left:406.00px;top:311.00px;font-size:12.5px;line-height:16px;color:#000;font-family:'DejaVu Sans', 'Liberation Sans', sans-serif;">24</span>
<span class="t" style="left:606.00px;top:311.00px;font-size:12.5px;line-height:16px;color:#000;font-family:'DejaVu Sans', 'Liberation Sans', sans-serif;">12</span>
<span class="t" style="left:814.00px;top:311.00px;font-size:12.5px;line-height:16px;color:#000;font-family:'DejaVu Sans', 'Liberation Sans', sans-serif;">4</span>
<span class="t" style="left:1006.00px;top:311.00px;font-size:12.5px;line-height:16px;color:#000;font-family:'DejaVu Sans', 'Liberation Sans', sans-serif;">11</span>
<span class="t" style="left:7.60px;top:330.80px;font-size:12px;line-height:16px;color:#262626;font-family:'DejaVu Sans', 'Liberation Sans', sans-serif;">6</span>
<span class="t" style="left:406.00px;top:331.00px;font-size:12.5px;line-height:16px;color:#000;font-family:'DejaVu Sans', 'Liberation Sans', sans-serif;">54</span>
<span class="t" style="left:606.00px;top:331.00px;font-size:12.5px;line-height:16px;color:#000;font-family:'DejaVu Sans', 'Liberation Sans', sans-serif;">25</span>
<span class="t" style="left:806.00px;top:331.00px;font-size:12.5px;line-height:16px;color:#000;font-family:'DejaVu Sans', 'Liberation Sans', sans-serif;">11</span>
<span class="t" style="left:1006.00px;top:331.00px;font-size:12.5px;line-height:16px;color:#000;font-family:'DejaVu Sans', 'Liberation Sans', sans-serif;">13</span>
<span class="t" style="left:7.60px;top:350.80px;font-size:12px;line-height:16px;color:#262626;font-family:'DejaVu Sans', 'Liberation Sans', sans-serif;">7</span>
<span class="t" style="left:398.00px;top:351.00px;font-size:12.5px;line-height:16px;color:#000;font-family:'DejaVu Sans', 'Liberation Sans', sans-serif;">110</span>
<span class="t" style="left:606.00px;top:351.00px;font-size:12.5px;line-height:16px;color:#000;font-family:'DejaVu Sans', 'Liberation Sans', sans-serif;">63</span>
<span class="t" style="left:806.00px;top:351.00px;font-size:12.5px;line-height:16px;color:#000;font-family:'DejaVu Sans', 'Liberation Sans', sans-serif;">46</span>
<span class="t" style="left:1006.00px;top:351.00px;font-size:12.5px;line-height:16px;color:#000;font-family:'DejaVu Sans', 'Liberation Sans', sans-serif;">75</span>
<span class="t" style="left:7.60px;top:370.80px;font-size:12px;line-height:16px;color:#262626;font-family:'DejaVu Sans', 'Liberation Sans', sans-serif;">8</span>
<span class="t" style="left:406.00px;top:371.00px;font-size:12.5px;line-height:16px;color:#000;font-family:'DejaVu Sans', 'Liberation Sans', sans-serif;">73</span>
<span class="t" style="left:606.00px;top:371.00px;font-size:12.5px;line-height:16px;color:#000;font-family:'DejaVu Sans', 'Liberation Sans', sans-serif;">38</span>
<span class="t" style="left:806.00px;top:371.00px;font-size:12.5px;line-height:16px;color:#000;font-family:'DejaVu Sans', 'Liberation Sans', sans-serif;">22</span>
<span class="t" style="left:1006.00px;top:371.00px;font-size:12.5px;line-height:16px;color:#000;font-family:'DejaVu Sans', 'Liberation Sans', sans-serif;">21</span>
<span class="t" style="left:7.60px;top:390.80px;font-size:12px;line-height:16px;color:#262626;font-family:'DejaVu Sans', 'Liberation Sans', sans-serif;">9</span>
<span class="t" style="left:406.00px;top:391.00px;font-size:12.5px;line-height:16px;color:#000;font-family:'DejaVu Sans', 'Liberation Sans', sans-serif;">61</span>
<span class="t" style="left:606.00px;top:391.00px;font-size:12.5px;line-height:16px;color:#000;font-family:'DejaVu Sans', 'Liberation Sans', sans-serif;">10</span>
<span class="t" style="left:806.00px;top:391.00px;font-size:12.5px;line-height:16px;color:#000;font-family:'DejaVu Sans', 'Liberation Sans', sans-serif;">15</span>
<span class="t" style="left:1006.00px;top:391.00px;font-size:12.5px;line-height:16px;color:#000;font-family:'DejaVu Sans', 'Liberation Sans', sans-serif;">18</span>
<span class="t" style="left:4.20px;top:410.80px;font-size:12px;line-height:16px;color:#262626;font-family:'DejaVu Sans', 'Liberation Sans', sans-serif;">10</span>
<span class="t" style="left:406.00px;top:411.00px;font-size:12.5px;line-height:16px;color:#000;font-family:'DejaVu Sans', 'Liberation Sans', sans-serif;">59</span>
<span class="t" style="left:606.00px;top:411.00px;font-size:12.5px;line-height:16px;color:#000;font-family:'DejaVu Sans', 'Liberation Sans', sans-serif;">39</span>
<span class="t" style="left:806.00px;top:411.00px;font-size:12.5px;line-height:16px;color:#000;font-family:'DejaVu Sans', 'Liberation Sans', sans-serif;">22</span>
<span class="t" style="left:1006.00px;top:411.00px;font-size:12.5px;line-height:16px;color:#000;font-family:'DejaVu Sans', 'Liberation Sans', sans-serif;">31</span>
<span class="t" style="left:4.70px;top:430.80px;font-size:12px;line-height:16px;color:#262626;font-family:'DejaVu Sans', 'Liberation Sans', sans-serif;">11</span>
<span class="t" style="left:406.00px;top:431.00px;font-size:12.5px;line-height:16px;color:#000;font-family:'DejaVu Sans', 'Liberation Sans', sans-serif;">36</span>
<span class="t" style="left:606.00px;top:431.00px;font-size:12.5px;line-height:16px;color:#000;font-family:'DejaVu Sans', 'Liberation Sans', sans-serif;">12</span>
<span class="t" style="left:814.00px;top:431.00px;font-size:12.5px;line-height:16px;color:#000;font-family:'DejaVu Sans', 'Liberation Sans', sans-serif;">7</span>
<span class="t" style="left:1006.00px;top:431.00px;font-size:12.5px;line-height:16px;color:#000;font-family:'DejaVu Sans', 'Liberation Sans', sans-serif;">14</span>
<span class="t" style="left:27.50px;top:231.00px;font-size:12.5px;line-height:16px;color:#000;font-weight:700;font-family:'DejaVu Sans', 'Liberation Sans', sans-serif;letter-spacing:0.200px;">Description</span>
<span class="t" style="left:26.60px;top:251.00px;font-size:12.5px;line-height:16px;color:#000;font-family:'DejaVu Sans', 'Liberation Sans', sans-serif;letter-spacing:0.327px;width:197.5px;overflow:hidden;">Daily: The number of people your Page reached broken down by how many times</span>
<!-- ===== freeze panes menu ===== -->
<div id="menu" style="left:651px;top:141px;width:299px;height:169px;background:#fff;border:1px solid #c8c8c8;box-shadow:1px 2px 4px rgba(0,0,0,.22);"></div>
<div style="left:653px;top:143px;width:295px;height:55px;background:#c6c6c6;"></div>
<svg style="left:666px;top:153px" width="32" height="30" viewBox="0 0 32 30" fill="none" stroke="#3b3b3b" stroke-width="1"><rect x="3.500" y="6.500" width="27" height="21" fill="#fdfdfd" stroke="none"/><rect x="3.500" y="6.500" width="27" height="7" fill="#78b6ee" stroke="none"/><rect x="3.500" y="6.500" width="9" height="21" fill="#78b6ee" stroke="none"/><path d="M13 20.500 H30 M21.500 14 V27" stroke="#777"/><path d="M30.500 13.500 V27.500 H12.500" stroke="#3b3b3b"/><path d="M3.500 6.500 H30.500 V13.500 H12.500 V27.500 H3.500 Z M21.500 6.500 V13.500 M12.500 6.500 V13.500 H3.500 M3.500 20.500 H12.500" stroke="#1b7fd4"/><path d="M6.600 1.500 V12 M2 4.100 L11.200 9.400 M11.200 4.100 L2 9.400" stroke="#c6c6c6" stroke-width="3.600" stroke-linecap="round" fill="none"/><path d="M6.600 1 V12.500 M1.600 3.850 L11.600 9.650 M11.600 3.850 L1.600 9.650" stroke="#2b8ad2" stroke-width="1.600" fill="none"/></svg>
<svg style="left:666px;top:208px" width="32" height="30" viewBox="0 0 32 30" fill="none" stroke="#3b3b3b" stroke-width="1"><rect x="3.500" y="6.500" width="27" height="21" fill="#f8f8f8" stroke="none"/><rect x="3.500" y="6.500" width="27" height="7" fill="#78b6ee" stroke="none"/><path d="M4 20.500 H30 M12.500 14 V27 M21.500 14 V27" stroke="#777"/><path d="M3.500 13.500 V27.500 H30.500 V13.500 Z" stroke="#3b3b3b"/><path d="M3.500 13.500 V6.500 H30.500 V13.500 M12.500 6.500 V13 M21.500 6.500 V13" stroke="#1b7fd4"/><path d="M6.600 1.500 V12 M2 4.100 L11.200 9.400 M11.200 4.100 L2 9.400" stroke="#fff" stroke-width="3.600" stroke-linecap="round" fill="none"/><path d="M6.600 1 V12.500 M1.600 3.850 L11.600 9.650 M11.600 3.850 L1.600 9.650" stroke="#2b8ad2" stroke-width="1.600" fill="none"/></svg>
<svg style="left:666px;top:263px" width="32" height="30" viewBox="0 0 32 30" fill="none" stroke="#3b3b3b" stroke-width="1"><rect x="3.500" y="6.500" width="27" height="21" fill="#f8f8f8" stroke="none"/><rect x="3.500" y="6.500" width="9" height="21" fill="#78b6ee" stroke="none"/><path d="M13 13.500 H30 M13 20.500 H30 M21.500 7 V27" stroke="#777"/><path d="M12.500 6.500 H30.500 V27.500 H12.500 Z" stroke="#3b3b3b"/><path d="M12.500 6.500 H3.500 V27.500 H12.500 Z M3.500 13.500 H12.500 M3.500 20.500 H12.500" stroke="#1b7fd4"/><path d="M6.600 1.500 V12 M2 4.100 L11.200 9.400 M11.200 4.100 L2 9.400" stroke="#fff" stroke-width="3.600" stroke-linecap="round" fill="none"/><path d="M6.600 1 V12.500 M1.600 3.850 L11.600 9.650 M11.600 3.850 L1.600 9.650" stroke="#2b8ad2" stroke-width="1.600" fill="none"/></svg>
<svg id="cursor" style="left:696px;top:174px" width="13" height="20" viewBox="0 0 13 20"><path d="M1 1 V16.500 L4.600 13 L7.200 19 L9.500 18 L7 12.200 H12 Z" fill="#fff" stroke="#000" stroke-width="1"/></svg>

<!-- menu text -->
<span class="t" style="left:713.00px;top:147.00px;font-size:12px;line-height:16px;color:#262626;letter-spacing:0.185px;-webkit-text-stroke:.5px #262626;">Un<u>f</u>reeze Panes</span>
<span class="t" style="left:713.00px;top:164.00px;font-size:12px;line-height:16px;color:#3b3b3b;letter-spacing:0.017px;">Unlock all rows and columns to scroll</span>
<span class="t" style="left:713.30px;top:179.00px;font-size:12px;line-height:16px;color:#3b3b3b;letter-spacing:0.054px;">through the entire worksheet.</span>
<span class="t" style="left:712.60px;top:202.00px;font-size:12px;line-height:16px;color:#444;letter-spacing:0.223px;-webkit-text-stroke:.5px #444;">Freeze Top <u>R</u>ow</span>
<span class="t" style="left:713.00px;top:219.00px;font-size:12px;line-height:16px;color:#5e5e5e;letter-spacing:-0.026px;">Keep the top row visible while scrolling</span>
<span class="t" style="left:713.30px;top:234.00px;font-size:12px;line-height:16px;color:#5e5e5e;letter-spacing:0.021px;">through the rest of the worksheet.</span>
<span class="t" style="left:712.60px;top:257.00px;font-size:12px;line-height:16px;color:#444;letter-spacing:0.117px;-webkit-text-stroke:.5px #444;">Freeze First <u>C</u>olumn</span>
<span class="t" style="left:713.00px;top:274.00px;font-size:12px;line-height:16px;color:#5e5e5e;letter-spacing:0.006px;">Keep the first column visible while</span>
<span class="t" style="left:712.50px;top:289.00px;font-size:12px;line-height:16px;color:#5e5e5e;letter-spacing:0.049px;">scrolling through the rest of the worksheet.</span>
</div>
</body></html>
